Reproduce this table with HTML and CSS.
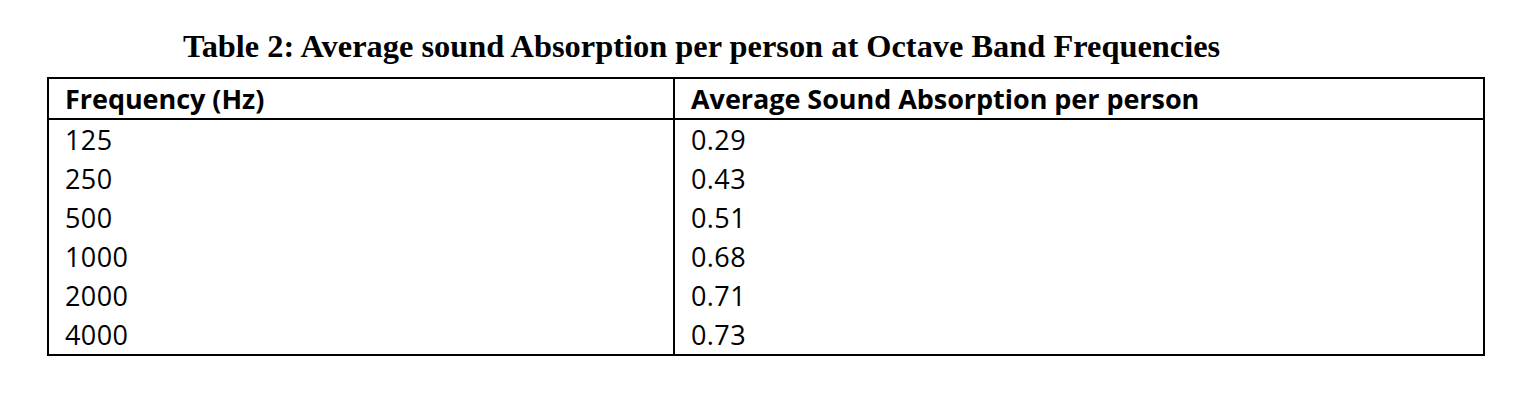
FILE: index.html
```html
<!DOCTYPE html>
<html>
<head>
<meta charset="utf-8">
<link rel="stylesheet" href="styles.css">
</head>
<body>
<div class="page">
  <h1 class="caption">Table 2: Average sound Absorption per person at Octave Band Frequencies</h1>
  <table class="data">
    <thead>
      <tr><th class="c1">Frequency (Hz)</th><th>Average Sound Absorption per person</th></tr>
    </thead>
    <tbody>
      <tr><td>125</td><td>0.29</td></tr>
      <tr><td>250</td><td>0.43</td></tr>
      <tr><td>500</td><td>0.51</td></tr>
      <tr><td>1000</td><td>0.68</td></tr>
      <tr><td>2000</td><td>0.71</td></tr>
      <tr><td>4000</td><td>0.73</td></tr>
    </tbody>
  </table>
</div>
</body>
</html>
```
FILE: styles.css
```css
html, body {
  margin: 0;
  padding: 0;
  background: #fff;
}
.page {
  padding: 26px 0 0 47px;
}
.caption {
  margin: 0 0 0 136px;
  font-family: "Liberation Serif", "Times New Roman", serif;
  font-weight: bold;
  font-size: 32.4px;
  line-height: 40px;
  height: 51px;
  color: #000;
}
.data {
  border-collapse: collapse;
  width: 1438px;
  font-family: "Open Sans", Lato, sans-serif;
  font-size: 27px;
  letter-spacing: 0.4px;
  color: #000;
}
.data th, .data td {
  border: 2px solid #000;
  text-align: left;
  padding: 0 0 0 16px;
  line-height: 30px;
}
.data th {
  font-weight: 700;
  letter-spacing: -0.05px;
  height: 39px;
}
.data td {
  border-top: none;
  border-bottom: none;
  height: 39px;
}
.data tbody tr:last-child td {
  border-bottom: 2px solid #000;
}
.data .c1 {
  width: 608px;
}
```
